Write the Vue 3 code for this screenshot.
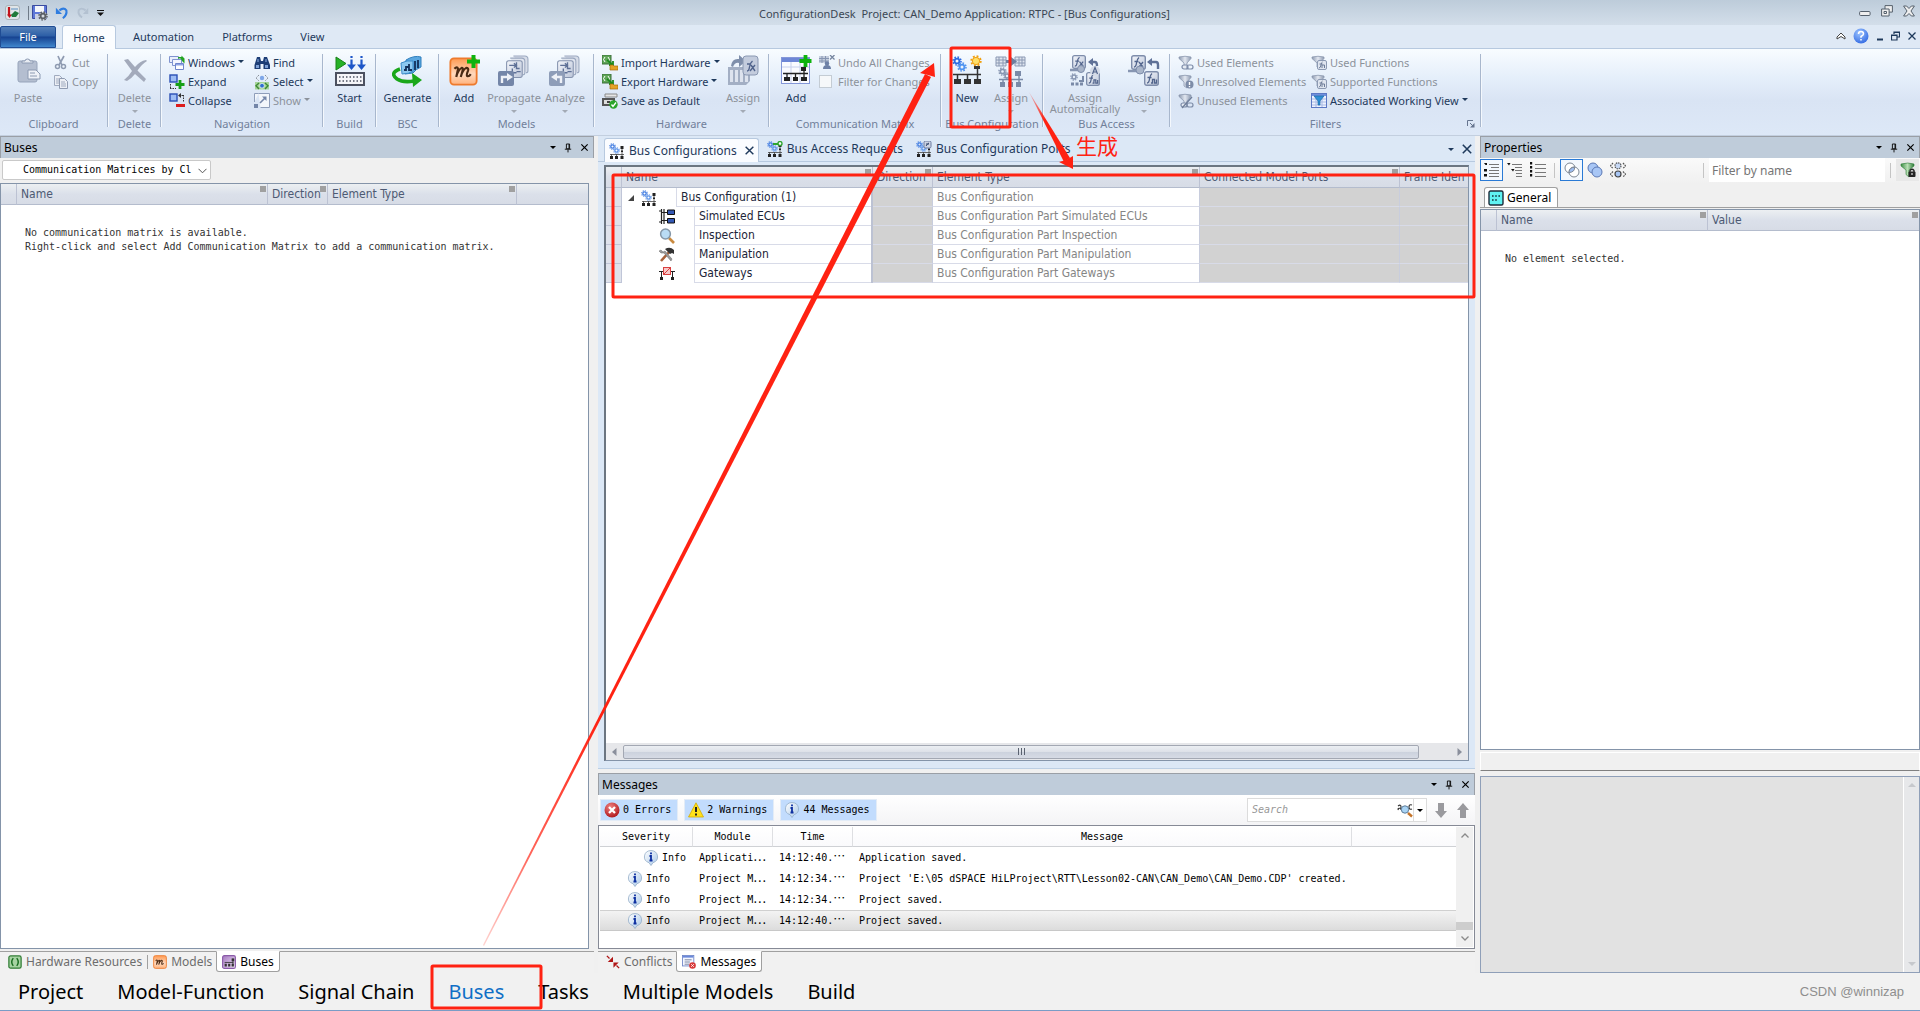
<script setup>
import { ref } from 'vue'

const filterText = ref('')
const searchText = ref('')

const ribbon = [
  { id: 'clipboard', label: 'Clipboard', parts: [
    { kind: 'big', w: 'w50', icon: 'paste', text: 'Paste', off: true },
    { kind: 'list', rows: [{ icon: 'cut', text: 'Cut', off: true }, { icon: 'copy', text: 'Copy', off: true }] }
  ] },
  { id: 'delete', label: 'Delete', parts: [{ kind: 'big', w: 'w46', icon: 'delete', text: 'Delete', off: true, menu: true }] },
  { id: 'navigation', label: 'Navigation', parts: [
    { kind: 'list', w: 'w85', rows: [{ icon: 'windows', text: 'Windows', menu: true }, { icon: 'expand', text: 'Expand' }, { icon: 'collapse', text: 'Collapse' }] },
    { kind: 'list', rows: [{ icon: 'find', text: 'Find' }, { icon: 'select', text: 'Select', menu: true }, { icon: 'show', text: 'Show', menu: true, off: true }] }
  ] },
  { id: 'build', label: 'Build', parts: [{ kind: 'big', w: 'w46', icon: 'start', text: 'Start' }] },
  { id: 'bsc', label: 'BSC', parts: [{ kind: 'big', w: 'w56', icon: 'generate', text: 'Generate' }] },
  { id: 'models', label: 'Models', parts: [
    { kind: 'big', w: 'w44', icon: 'addmodel', text: 'Add' },
    { kind: 'big', w: 'w56', icon: 'propagate', text: 'Propagate', off: true, menu: true },
    { kind: 'big', w: 'w46', icon: 'analyze', text: 'Analyze', off: true, menu: true }
  ] },
  { id: 'hardware', label: 'Hardware', parts: [
    { kind: 'list', w: 'w118', rows: [{ icon: 'import', text: 'Import Hardware', menu: true }, { icon: 'export', text: 'Export Hardware', menu: true }, { icon: 'savedef', text: 'Save as Default' }] },
    { kind: 'big', w: 'w46', icon: 'assignhw', text: 'Assign', off: true, menu: true }
  ] },
  { id: 'matrix', label: 'Communication Matrix', parts: [
    { kind: 'big', w: 'w46', icon: 'addmatrix', text: 'Add' },
    { kind: 'list', rows: [{ icon: 'undoall', text: 'Undo All Changes', off: true }, { check: true, text: 'Filter for Changes', off: true }] }
  ] },
  { id: 'busconf', label: 'Bus Configuration', parts: [
    { kind: 'big', w: 'w44', icon: 'newbus', text: 'New' },
    { kind: 'big', w: 'w44', icon: 'assignbus', text: 'Assign', off: true, menu: true }
  ] },
  { id: 'busaccess', label: 'Bus Access', parts: [
    { kind: 'big', w: 'w74', icon: 'assignauto', text: 'Assign Automatically', off: true },
    { kind: 'big', w: 'w44', icon: 'assignaccess', text: 'Assign', off: true, menu: true }
  ] },
  { id: 'filters', label: 'Filters', launcher: true, parts: [
    { kind: 'list', w: 'w133', rows: [{ icon: 'fused', text: 'Used Elements', off: true }, { icon: 'funres', text: 'Unresolved Elements', off: true }, { icon: 'funused', text: 'Unused Elements', off: true }] },
    { kind: 'list', rows: [{ icon: 'ffn', text: 'Used Functions', off: true }, { icon: 'ffn', text: 'Supported Functions', off: true }, { icon: 'wview', text: 'Associated Working View', menu: true }] }
  ] }
]

const docTabs = [
  { icon: 'busconf', text: 'Bus Configurations', active: true },
  { icon: 'busreq', text: 'Bus Access Requests' },
  { icon: 'busports', text: 'Bus Configuration Ports' }
]

const configRows = [
  { icon: 'busconf', name: 'Bus Configuration (1)', type: 'Bus Configuration', root: true },
  { icon: 'ecu', name: 'Simulated ECUs', type: 'Bus Configuration Part Simulated ECUs' },
  { icon: 'inspect', name: 'Inspection', type: 'Bus Configuration Part Inspection' },
  { icon: 'hammer', name: 'Manipulation', type: 'Bus Configuration Part Manipulation' },
  { icon: 'gateway', name: 'Gateways', type: 'Bus Configuration Part Gateways' }
]

const messages = [
  { module: 'Applicati', time: '14:12:40.', text: 'Application saved.', deep: true },
  { module: 'Project M', time: '14:12:34.', text: "Project 'E:\\05 dSPACE HiLProject\\RTT\\Lesson02-CAN\\CAN_Demo\\CAN_Demo.CDP' created." },
  { module: 'Project M', time: '14:12:34.', text: 'Project saved.' },
  { module: 'Project M', time: '14:12:40.', text: 'Project saved.', selected: true }
]

const counters = [
  { icon: 'error', text: '0 Errors' },
  { icon: 'warning', text: '2 Warnings' },
  { icon: 'info', text: '44 Messages' }
]

const workspaces = ['Project', 'Model-Function', 'Signal Chain', 'Buses', 'Tasks', 'Multiple Models', 'Build']
</script>

<template>
  <div class="desk">
    <svg class="sprites" width="0" height="0" aria-hidden="true">
      <defs>
        <linearGradient id="gOrange" x1="0" y1="0" x2="0" y2="1"><stop offset="0" stop-color="#ff9a52" /><stop offset=".6" stop-color="#ffd9bd" /><stop offset="1" stop-color="#ffb27c" /></linearGradient>
        <linearGradient id="gCard" x1="0" y1="0" x2="1" y2="1"><stop offset="0" stop-color="#f3f5fa" /><stop offset="1" stop-color="#bcc6d9" /></linearGradient>
        <linearGradient id="gFunnel" x1="0" y1="0" x2="1" y2="0"><stop offset="0" stop-color="#8d9ab0" /><stop offset=".5" stop-color="#e2e7f0" /><stop offset="1" stop-color="#8d9ab0" /></linearGradient>
        <linearGradient id="gGreenFunnel" x1="0" y1="0" x2="1" y2="0"><stop offset="0" stop-color="#3f9048" /><stop offset=".5" stop-color="#b9e0b5" /><stop offset="1" stop-color="#2f7d39" /></linearGradient>
        <linearGradient id="gPurple" x1="0" y1="0" x2="1" y2="1"><stop offset="0" stop-color="#a477c0" /><stop offset="1" stop-color="#f0e4f6" /></linearGradient>
        <radialGradient id="gHelp" cx=".4" cy=".3" r=".8"><stop offset="0" stop-color="#9cc4ff" /><stop offset="1" stop-color="#2a63e0" /></radialGradient>
        <radialGradient id="gErr" cx=".4" cy=".3" r=".8"><stop offset="0" stop-color="#f08080" /><stop offset="1" stop-color="#a80d12" /></radialGradient>
        <linearGradient id="gInfo" x1="0" y1="0" x2="1" y2="1"><stop offset="0" stop-color="#ffffff" /><stop offset="1" stop-color="#a9c8e8" /></linearGradient>
        <linearGradient id="gArrow" gradientUnits="userSpaceOnUse" x1="484" y1="945" x2="600" y2="720"><stop offset="0" stop-color="#ff2212" stop-opacity=".2" /><stop offset=".4" stop-color="#ff2212" stop-opacity=".7" /><stop offset="1" stop-color="#ff2212" /></linearGradient>
        <linearGradient id="gArrow2" gradientUnits="userSpaceOnUse" x1="1029" y1="92" x2="1045" y2="120"><stop offset="0" stop-color="#ff2212" stop-opacity=".2" /><stop offset="1" stop-color="#ff2212" /></linearGradient>
      </defs>

      <symbol id="gear" viewBox="0 0 12 12">
        <circle cx="6" cy="6" r="4.8" fill="none" stroke="currentColor" stroke-width="1.8" stroke-dasharray="1.9 1.87" />
        <circle cx="6" cy="6" r="2.9" fill="none" stroke="currentColor" stroke-width="2.2" />
      </symbol>
      <symbol id="card" viewBox="0 0 24 24">
        <path d="M9 1h11q3 0 3 3v11q0 2-2 2" fill="#d6dce8" stroke="#9ba8bf" />
        <path d="M6 3h11q3 0 3 3v11q0 2-2 2" fill="#dfe4ee" stroke="#9ba8bf" />
        <rect x="2.500" y="5.500" width="15" height="16" rx="2" fill="url(#gCard)" stroke="#8593ae" />
        <path d="M5 10h7M9.500 8l2.500 2-2.500 2M12 7v6h3M12 16h4M8 13v4h4" fill="none" stroke="#5f7197" stroke-width="1.3" />
      </symbol>
      <symbol id="funnel" viewBox="0 0 16 16"><path d="M1 2q6-1.500 12 0v1.500L9 8v6l-3-2V8L1 3.500Z" fill="url(#gFunnel)" stroke="#8b98ae" stroke-width=".8" /></symbol>

      <symbol id="i-app" viewBox="0 0 16 16"><rect x=".5" y=".5" width="14" height="14" rx="2.500" fill="#dfe5e8" stroke="#a9b3b9" /><path d="M4 2v9" stroke="#c3141c" stroke-width="2.200" /><path d="M2 9.500h5L4.500 13Z" fill="#c3141c" /><path d="M6 10l4-4 4 2-3 4H7Z" fill="#1f7a3a" /><path d="M6 4h7" stroke="#5b8fc2" /></symbol>
      <symbol id="i-save" viewBox="0 0 16 16"><path d="M.5.5h14v13H.5Z" fill="#5e78d8" stroke="#3a4ba0" /><path d="M3 1h9v6H3Z" fill="#f4f6fb" /><path d="M3 9h6v5H3Z" fill="#c9d0e4" /><circle cx="11" cy="11" r="4" fill="#d5dae0" /><g color="#5a5f66"><use href="#gear" x="6" y="6" width="10" height="10" /></g></symbol>
      <symbol id="i-undo" viewBox="0 0 16 16"><path d="M5 5q5-4 8 0 1 5-4 9" fill="none" stroke="#2f7de0" stroke-width="2.400" /><path d="M1 2v7h7Z" fill="#2f7de0" /></symbol>
      <symbol id="i-redo" viewBox="0 0 16 16"><path d="M11 5q-5-4-8 0-1 5 4 8" fill="none" stroke="#b3c1d1" stroke-width="2.200" /><path d="M14 2v7H8Z" fill="#b3c1d1" /></symbol>

      <symbol id="i-paste" viewBox="0 0 32 32"><rect x="6" y="6" width="19" height="21" rx="2" fill="#b4bed0" stroke="#97a4bb" /><path d="M10 8h11V6h-3q0-2-2.500-2T13 6h-3Z" fill="#e8ecf3" stroke="#8c9ab2" /><path d="M16 15h8l4 4v5H16Z" fill="#eef1f7" stroke="#8c9ab2" /><path d="M18 18h5M18 21h7" stroke="#8c9ab2" /></symbol>
      <symbol id="i-delete" viewBox="0 0 32 32"><path d="M5 5 9 4l7 8q5-6 11-7l1 1q-5 3-9.500 9.500L27 24l-2 3-9-8q-4 5-8 7l-3-1q5-4 8-9Z" fill="#a3aabb" /></symbol>
      <symbol id="i-cut" viewBox="0 0 16 16"><path d="M5 1l4 9M11 1 6 10" stroke="#8f9bb1" stroke-width="1.700" fill="none" /><circle cx="4.500" cy="11.500" r="2" fill="none" stroke="#8f9bb1" stroke-width="1.500" /><circle cx="10.500" cy="11.500" r="2" fill="none" stroke="#8f9bb1" stroke-width="1.500" /></symbol>
      <symbol id="i-copy" viewBox="0 0 16 16"><path d="M1.500 1.500h5l3 3v7h-8Z" fill="#eceff5" stroke="#a0abbf" /><path d="M3 5h4M3 7h4M3 9h4" stroke="#a0abbf" /><path d="M6.500 4.500h5l3 3v7h-8Z" fill="#eceff5" stroke="#8f9bb1" /><path d="M8 8h4M8 10h5M8 12h5" stroke="#a0abbf" /></symbol>
      <symbol id="i-windows" viewBox="0 0 16 16"><path d="M.5 1.500h9v6h-9Z" fill="#e9eefc" stroke="#7f93cf" /><path d="M3.500 4.500h9v6h-9Z" fill="#f3f6ff" stroke="#7f93cf" /><path d="M6.500 8.500h8v6h-8Z" fill="#fff" stroke="#6e85cc" /><path d="M7 9h7v1.500H7Z" fill="#8ea4e4" /><path d="M9 2h3.500v-1.500l3 3v5l-2-2-2-3H9Z" fill="#22a322" /></symbol>
      <symbol id="i-expand" viewBox="0 0 16 16"><rect x="1" y="1" width="7" height="7" fill="#9dbcf4" stroke="#2a4fb5" stroke-width="1.400" /><path d="M1.500 10v5M1 14.500h6" stroke="#333" stroke-dasharray="1.500 1" /><path d="M11 6v9M6.500 10.500h9" stroke="#16a016" stroke-width="2.800" /></symbol>
      <symbol id="i-collapse" viewBox="0 0 16 16"><rect x="1" y="1" width="7" height="7" fill="#9dbcf4" stroke="#2a4fb5" stroke-width="1.400" /><path d="M10 2.500h5M14.500 2v7" stroke="#333" stroke-dasharray="1.500 1" /><path d="M12 0l-3 2.500L12 5Z" fill="#333" /><path d="M7 12.500h9" stroke="#dd1c1c" stroke-width="3" /></symbol>
      <symbol id="i-find" viewBox="0 0 16 16"><path d="M3 2h3l1 4h2l1-4h3l3 8v4H9.500V9h-3v5H.5v-4Z" fill="#1d3d75" /><path d="M2 10h3v3H2ZM11 10h3v3h-3Z" fill="#7ea0d6" /><path d="M4 4v3M12 4v3" stroke="#8fb0e4" /></symbol>
      <symbol id="i-select" viewBox="0 0 16 16"><path d="M1 8h14v7.500H1Z" fill="#a6d49b" /><path d="M5 1 2 4l3 3M11 1l3 3-3 3" fill="none" stroke="#8a9098" stroke-dasharray="1.500 .7" /><circle cx="8" cy="4" r="2.200" fill="#7ea7e8" /><path d="M5 9l-3 2.700L5 15M11 9l3 2.700L11 15" fill="none" stroke="#3f8a35" stroke-width="1.400" /><circle cx="8" cy="11.700" r="2.300" fill="#2f6fd0" stroke="#fff" stroke-width=".6" /></symbol>
      <symbol id="i-show" viewBox="0 0 16 16"><path d="M4.500.5h11v14h-9M.5 9V.5h4" fill="#f3f6fb" stroke="#8e9db9" /><path d="M6 10l5-5" stroke="#7385a8" stroke-width="1.600" /><path d="M8 3.500h4.500V8Z" fill="#7385a8" /><rect x="0" y="11" width="4" height="4" fill="#7385a8" /></symbol>

      <symbol id="i-start" viewBox="0 0 32 32"><path d="M2 2v13l10-6.500Z" fill="#26b226" stroke="#188218" /><path d="M17.500 1v11M27.500 1v11" stroke="#1d56c8" stroke-width="2.200" stroke-dasharray="2 1.500 9" /><path d="M13 9.500h9L17.500 15ZM23 9.500h9L27.500 15Z" fill="#1d56c8" /><rect x="2" y="18" width="28" height="12" fill="#f5f5f8" stroke="#4c5160" stroke-width="2" /><path d="M5 22h23M5 26h23" stroke="#4c5160" stroke-width="1.600" stroke-dasharray="1.500 2" /></symbol>
      <symbol id="i-generate" viewBox="0 0 32 32"><path d="M14 5q8-5 15-3v10q-5 2-8 6l-8 1Z" fill="#5aa7e0" stroke="#2f7fbd" /><path d="M9 8q6-3 12-2v10q-4 3-11 3Z" fill="#8cc8f0" stroke="#3c8bc8" /><path d="M12 15h2v-3h3v3h3M17 9v3M23 6v9M26 5v8" stroke="#13305a" stroke-width="1.800" fill="none" /><path d="M8 14Q-3 18 5 24q6 4 17 2" fill="none" stroke="#1aa71a" stroke-width="3.600" /><path d="M20 18l10 7-9 7Z" fill="#1aa71a" /></symbol>
      <symbol id="i-m" viewBox="0 0 32 32"><rect x="1.500" y="1.500" width="29" height="29" rx="4" fill="url(#gOrange)" stroke="#ee7a2c" stroke-width="2" /><path d="M6 13q3-3 4 0-1 5-2 9 2-8 6-10 2 0 1 3l-2 7q2-8 6-10 3 0 2 3-2 5-1 6 2 1 4-2" fill="none" stroke="#4a2a14" stroke-width="2.400" /></symbol>
      <symbol id="i-addmodel" viewBox="0 0 32 32"><use href="#i-m" x="1" y="2" width="29" height="29" /><path d="M25.500 0v13M19 6.500h13" stroke="#0db30d" stroke-width="4" /></symbol>
      <symbol id="i-propagate" viewBox="0 0 32 32"><use href="#card" x="6" y="0" width="25" height="25" /><rect x="0" y="16" width="16" height="15" rx="2" fill="#7486a8" /><path d="M4 28v-6h6" fill="none" stroke="#eef1f7" stroke-width="2.400" /><path d="M9 18l6 4-6 4Z" fill="#eef1f7" /></symbol>
      <symbol id="i-analyze" viewBox="0 0 32 32"><use href="#card" x="6" y="0" width="25" height="25" /><rect x="0" y="16" width="16" height="15" rx="2" fill="#8e9db8" /><path d="M12 28v-6H7" fill="none" stroke="#eef1f7" stroke-width="2.400" /><path d="M8 18l-6 4 6 4Z" fill="#eef1f7" /></symbol>
      <symbol id="i-import" viewBox="0 0 16 16"><path d="M0 0h9v9H0Z" fill="#5fa657" stroke="#3d6e3a" /><path d="M3 2 1.500 4.500 3 7M6 2l1.500 2.500L6 7" fill="none" stroke="#fff" /><path d="M5 5l6 5M11 6v4H7" fill="none" stroke="#1c8a1c" stroke-width="1.800" /><path d="M8 10h3l1 1h4v4H8Z" fill="#e6a328" stroke="#a66c0b" stroke-width=".7" /></symbol>
      <symbol id="i-savedef" viewBox="0 0 16 16"><path d="M3 1h12v3H3Z" fill="#e6e6e6" stroke="#8a8a8a" /><path d="M0 5h13v8H0Z" fill="#555" /><path d="M2 7h9v4H2Z" fill="#ddd" /><path d="M5 8h3v2H5Z" fill="#444" /><circle cx="11.500" cy="11.500" r="4.200" fill="#2aa52a" /><path d="M9.500 11.500l1.500 2 3-4" fill="none" stroke="#fff" stroke-width="1.300" /></symbol>
      <symbol id="i-assignhw" viewBox="0 0 32 32"><path d="M1 12h22v14l-4 4H1Z" fill="#a3afc4" /><path d="M3 15h3v12H3ZM8 15h3v12H8ZM13 15h3v12h-3ZM18 15h3v12h-3Z" fill="#dde3ee" /><path d="M4 11q1-8 8-7V0l7 6-7 6V8Q8 7 6 12Z" fill="#7f8fab" /><rect x="16" y="1" width="15" height="19" rx="3" fill="#c3ccdd" stroke="#8a98b2" /><path d="M20 16q2 0 2.500-4t3-6M20 9h4M24 10l4 6M28 10l-5 6" fill="none" stroke="#51648c" stroke-width="1.400" /></symbol>
      <symbol id="i-addmatrix" viewBox="0 0 32 32"><rect x="1.500" y="2.500" width="28" height="26" fill="#fafbff" stroke="#8497d8" /><path d="M2 3h27v4H2Z" fill="#6d86d6" /><path d="M2 12h27M11 7v21M20 7v21" stroke="#c7d0ec" /><path d="M3 18.500h25M7 18v4M15.500 18v4M24 14v8" stroke="#222" stroke-width="1.300" /><path d="M4 22h6v4H4ZM13 22h5v4h-5ZM21 22h6v4h-6ZM21 12h5v4h-5Z" fill="#222" /><path d="M25.500 0v12M19.500 6h12" stroke="#0db30d" stroke-width="3.800" /></symbol>
      <symbol id="i-undoall" viewBox="0 0 16 16"><path d="M0 1h10v7H0Z" fill="#c4cddd" /><path d="M0 3.500h10M0 6h10M3 1v7M6.500 1v7" stroke="#8796b2" /><circle cx="8" cy="8.500" r="2.200" fill="#6d80a6" /><path d="M4 14q0-4 4-4t4 4Z" fill="#6d80a6" /><path d="M11 0l4.500 4.500M15.500 0 11 4.500" stroke="#75859f" stroke-width="1.300" /></symbol>
      <symbol id="i-newbus" viewBox="0 0 32 32"><g color="#2b6ae0"><use href="#gear" x="1" y="1" width="10" height="10" /></g><g color="#4f93f0"><use href="#gear" x="6" y="7" width="10" height="10" /></g><g color="#f0a010"><use href="#gear" x="19" y="0" width="12" height="12" /></g><circle cx="25" cy="6" r="3" fill="#ffe06a" /><path d="M2 19.500h28M6.500 19v5M16.500 19v5M26.500 12v12" stroke="#333" stroke-width="1.500" /><path d="M3 24h7v5H3ZM13 24h7v5h-7ZM23 24h7v5h-7ZM23 11h6v3h-6Z" fill="#333" /></symbol>
      <symbol id="i-assignbus" viewBox="0 0 32 32"><path d="M1 2h10v9H1ZM20 2h10v9H20Z" fill="#dfe5ef" stroke="#8b99b3" /><path d="M1 5h10M1 8h10M4 2v9M8 2v9M24 2v9M27 2v9M20 5h10M20 8h10" stroke="#8b99b3" /><path d="M11 6.500h6" stroke="#6d7f9f" stroke-width="3" /><path d="M16 2l6 4.500-6 4.500Z" fill="#6d7f9f" /><g color="#8796b2"><use href="#gear" x="3" y="12" width="9" height="9" /><use href="#gear" x="8" y="17" width="8" height="8" /></g><path d="M4 24.500h24M8 24v4M16 24v4M24 18v9" stroke="#7a8aa8" stroke-width="1.400" /><path d="M5 27h5v5H5ZM13 27h5v5h-5ZM21 27h5v5h-5ZM20 16h6v5h-6Z" fill="#7a8aa8" /></symbol>
      <symbol id="fx" viewBox="0 0 15 15"><rect x=".7" y=".7" width="13.600" height="13.600" rx="2" fill="url(#gCard)" stroke="#7e8dab" stroke-width="1.400" /><path d="M3 12q2 0 2.500-4t2.500-5.500M3.500 6.500h4M8 7l4 5M12 7l-4 5" fill="none" stroke="#51648c" stroke-width="1.300" /></symbol>
      <symbol id="fn" viewBox="0 0 15 15"><rect x=".7" y=".7" width="13.600" height="13.600" rx="2" fill="url(#gCard)" stroke="#7e8dab" stroke-width="1.400" /><path d="M3 12q2 0 2.500-4t2.500-5.500M3.500 6.500h4M7 12h1.500V8.500h2V12h2V8.500" fill="none" stroke="#51648c" stroke-width="1.300" /></symbol>
      <symbol id="i-assignaccess" viewBox="0 0 32 32"><use href="#fx" x="3" y="0" width="15" height="15" /><path d="M0 16h8" stroke="#8796b2" stroke-width="2.500" /><circle cx="12" cy="15" r="4" fill="#a9b5c9" stroke="#7e8dab" /><path d="M22 7h6q2 0 2 3v4" fill="none" stroke="#5f7197" stroke-width="2.400" /><path d="M24 3l-5 4 5 4Z" fill="#5f7197" /><use href="#fn" x="16" y="16" width="15" height="15" /></symbol>
      <symbol id="i-assignauto" viewBox="0 0 32 32"><use href="#fx" x="3" y="0" width="14" height="14" /><path d="M1 15h8" stroke="#8796b2" stroke-width="2.500" /><circle cx="12" cy="14" r="3.500" fill="#a9b5c9" stroke="#7e8dab" /><path d="M22 7h4q2 0 2 4" fill="none" stroke="#5f7197" stroke-width="2.400" /><path d="M24 3l-5 4 5 4Z" fill="#5f7197" /><use href="#fn" x="17" y="17" width="14" height="14" /><circle cx="26" cy="16" r="5" fill="#d5dbe7" /><path d="M23.500 19l2.500-6.500 2.500 6.500M24.500 17h3" fill="none" stroke="#51648c" stroke-width="1.200" /><g color="#8796b2"><use href="#gear" x="1" y="18" width="8" height="8" /></g><path d="M2 29h12" stroke="#7a8aa8" stroke-width="3" stroke-dasharray="3 1.500" /><path d="M10 26h4v-5" stroke="#7a8aa8" stroke-width="2" fill="none" /></symbol>

      <symbol id="i-fused" viewBox="0 0 16 16"><use href="#funnel" width="16" height="16" /><rect x="4" y="10" width="6" height="4" rx="2" fill="#e5eaf2" stroke="#7d8ca8" stroke-width="1.200" /><rect x="9" y="10" width="6" height="4" rx="2" fill="none" stroke="#7d8ca8" stroke-width="1.200" /></symbol>
      <symbol id="i-funres" viewBox="0 0 16 16"><use href="#funnel" width="16" height="16" /><circle cx="11.500" cy="10.500" r="4" fill="#7d8ca8" /><path d="M11.500 8v3M11.500 12v1.200" stroke="#fff" stroke-width="1.400" /></symbol>
      <symbol id="i-funused" viewBox="0 0 16 16"><use href="#funnel" width="16" height="16" /><rect x="3" y="10" width="6" height="4" rx="2" fill="#e5eaf2" stroke="#7d8ca8" stroke-width="1.200" /><rect x="9" y="10" width="6" height="4" rx="2" fill="none" stroke="#7d8ca8" stroke-width="1.200" /><path d="M14 4 4 15" stroke="#6d7c98" stroke-width="1.300" /></symbol>
      <symbol id="i-ffn" viewBox="0 0 16 16"><use href="#funnel" width="16" height="16" /><rect x="6.500" y="5.500" width="9" height="9" rx="1.500" fill="#dfe5ef" stroke="#8c9ab3" /><path d="M8 13q1.500 0 2-3t1.500-3M8.500 9h3M11 13v-3h2.500v3" fill="none" stroke="#6d7c98" /></symbol>
      <symbol id="i-wview" viewBox="0 0 16 16"><rect x=".5" y=".5" width="15" height="14" fill="#eef3ff" stroke="#5c78c4" /><path d="M1 1h14v2H1Z" fill="#6f8fdc" /><path d="M1 6h14M1 9h14M1 12h14M5 3v11M11 3v11" stroke="#a8b9e4" /><path d="M3 3h10l-4 5v4H7V8Z" fill="#2f8fd6" stroke="#1b6aa8" stroke-width=".7" /></symbol>

      <symbol id="i-busconf" viewBox="0 0 16 16"><g color="#3f7be0"><use href="#gear" x="0" y="0" width="7" height="7" /></g><g color="#5b93e8"><use href="#gear" x="4" y="4" width="7" height="7" /></g><path d="M1 11.500h14M2.500 11v2M7.500 11v2M13 5v8" stroke="#444" stroke-width=".8" /><path d="M1 13h3v3H1ZM6 13h3v3H6ZM11.500 13h3v3h-3ZM11.500 3h3v3h-3ZM12 7.500h2V9h-2Z" fill="#222" /></symbol>
      <symbol id="i-busreq" viewBox="0 0 16 16"><use href="#i-busconf" width="16" height="16" /><path d="M6 3h6" stroke="#2fa52f" stroke-width="2" /><circle cx="13" cy="2.500" r="2" fill="#fff" stroke="#2fa52f" stroke-width="1.400" /></symbol>
      <symbol id="i-busports" viewBox="0 0 16 16"><use href="#i-busconf" width="16" height="16" /><rect x="8" y="0" width="7" height="7" rx="1.500" fill="#cdd3e2" stroke="#6a7aa0" /><path d="M10 5q2-3 3-3M10 3h3" stroke="#33466f" fill="none" /></symbol>
      <symbol id="i-ecu" viewBox="0 0 16 16"><path d="M2.500 0v15M5 0v15M2 3.500h6M2 11.500h6M0 2h3M0 13h3" stroke="#222" stroke-width="1.200" /><path d="M8.500 1h7v4.500h-7ZM8.500 9.500h7V14h-7Z" fill="#3459b5" stroke="#111" /></symbol>
      <symbol id="i-inspect" viewBox="0 0 16 16"><path d="M10 10l5 5" stroke="#c98a3f" stroke-width="2.600" /><circle cx="6.500" cy="6" r="4.900" fill="#b9dcf5" stroke="#8497a8" stroke-width="1.500" /></symbol>
      <symbol id="i-hammer" viewBox="0 0 16 16"><path d="M2 14 11 4" stroke="#a8613a" stroke-width="2.600" /><path d="M6 2q5-3 9 1v4l-2-1-2 1Z" fill="#333" /><path d="M2 3l2 2 2-1 7 8-1 2-7-8-3 0-2-2Z" fill="#9a9a9a" stroke="#6b6b6b" stroke-width=".5" /></symbol>
      <symbol id="i-gateway" viewBox="0 0 16 16"><path d="M0 5.500h4M2.500 5v8M12 5.500h4M13.500 5v8" stroke="#222" /><path d="M1 11h3v3H1ZM12 11h3v3h-3Z" fill="#222" /><rect x="4.500" y="1.500" width="7" height="7" fill="#f8c9c9" stroke="#d94040" /><path d="M5 8l6-6" stroke="#d94040" /></symbol>

      <symbol id="i-error" viewBox="0 0 16 16"><circle cx="8" cy="8" r="7.500" fill="url(#gErr)" /><path d="M5 5l6 6M11 5l-6 6" stroke="#fff" stroke-width="2.300" /></symbol>
      <symbol id="i-warning" viewBox="0 0 16 16"><path d="M8 .8 15.500 15H.5Z" fill="#ffe11a" stroke="#d3a900" stroke-width=".8" /><path d="M8 5v5M8 11.500v2" stroke="#222" stroke-width="2" /></symbol>
      <symbol id="i-info" viewBox="0 0 16 16"><path d="M8 .5a7 6.300 0 0 1 2 12.200L8 15.500l-2-2.800A7 6.300 0 0 1 8 .5Z" fill="url(#gInfo)" stroke="#93adc8" stroke-width=".8" /><path d="M8 2.500v1.800M6.500 6H8v4.500M6.500 10.500h3" stroke="#0d2fa0" stroke-width="1.800" fill="none" /></symbol>
      <symbol id="i-conflict" viewBox="0 0 16 16"><path d="M1 1l3 3M15 15l-3-3" stroke="#b01515" stroke-width="1.500" /><path d="M8 2v6H2ZM8.500 8.500h6l-6 6Z" fill="#b01515" /></symbol>
      <symbol id="i-messages" viewBox="0 0 16 16"><rect x=".5" y=".5" width="13" height="12" fill="#f3f6ff" stroke="#6f86c8" /><path d="M1 1h12v2H1Z" fill="#6a88da" /><path d="M3 5.500h8M3 8h6M3 10.500h5" stroke="#6d7896" /><circle cx="12" cy="12" r="3.800" fill="#d83a3a" /><path d="M10.500 10.500l3 3M13.500 10.500l-3 3" stroke="#fff" /></symbol>
      <symbol id="i-hwres" viewBox="0 0 16 16"><rect x="1" y="1" width="14" height="14" rx="2" fill="#a6d3a2" stroke="#2f7c33" stroke-width="1.400" /><path d="M6 3.500Q2.500 8 6 12.500M10 3.500Q13.500 8 10 12.500" fill="none" stroke="#146a1c" stroke-width="1.600" /></symbol>
      <symbol id="i-buses" viewBox="0 0 16 16"><rect x=".7" y=".7" width="14.600" height="14.600" rx="2" fill="url(#gPurple)" stroke="#8a5aa8" stroke-width="1.300" /><path d="M3 8.500h10M12.500 4v8" stroke="#333" /><path d="M3 10h2.500v3H3ZM7 10h2.500v3H7ZM11 10h2.500v3H11ZM11 4h3v3h-3Z" fill="#333" /></symbol>
      <symbol id="i-general" viewBox="0 0 16 16"><rect x="1" y="1" width="14" height="14" rx="1.500" fill="#5ff2f2" stroke="#1d2b3a" stroke-width="1.400" /><path d="M4 6h9M4 10h6" stroke="#14303c" stroke-width="1.600" stroke-dasharray="1.600 1.600" /></symbol>
      <symbol id="i-lockfilter" viewBox="0 0 16 16"><path d="M1 2q7-2 13 0v2L9 8v7l-3-2.500V8L1 4Z" fill="url(#gGreenFunnel)" stroke="#2f7d39" stroke-width=".6" /><path d="M10 10V8.500q2-2.500 4 0V10" fill="none" stroke="#222" stroke-width="1.300" /><rect x="8.500" y="9.500" width="7" height="5.500" rx="1" fill="#222" /><path d="M12 11v2" stroke="#fff" /></symbol>
      <symbol id="i-list1" viewBox="0 0 16 16"><path d="M5 2.500h10M7 5.500h8M5 8.500h10M5 11.500h10M5 14.500h10" stroke="#777" /><path d="M0 1h3v2H1.500ZM0 7h3v2.500H0ZM0 12h3v2.500H0Z" fill="#111" /></symbol>
      <symbol id="i-list2" viewBox="0 0 16 16"><path d="M5 2.500h10M8 5.500h7M8 8.500h7M9 11.500h6M9 14.500h6" stroke="#777" /><path d="M0 1h3.500L2 3.500ZM4 7h3.500L6 9.500Z" fill="#111" /></symbol>
      <symbol id="i-list3" viewBox="0 0 16 16"><path d="M5 2.500h11M5 6.500h11M5 10.500h11M5 14.500h11" stroke="#777" stroke-width="1.200" /><path d="M1 0v16" stroke="#111" stroke-width="2.400" stroke-dasharray="2.500 1.500" /></symbol>
      <symbol id="i-venn1" viewBox="0 0 16 16"><circle cx="6" cy="6" r="5" fill="#fff" stroke="#7d8794" /><circle cx="10" cy="10" r="5" fill="#fff" stroke="#7d8794" /><path d="M5.200 9.600Q5.500 5.500 10.600 5.200 11 10 5.200 10.600Z" fill="#9dbdf0" stroke="#7d8794" /></symbol>
      <symbol id="i-venn2" viewBox="0 0 16 16"><circle cx="6" cy="6" r="5" fill="#a8c6f5" stroke="#5b78b4" /><circle cx="10" cy="10" r="5" fill="#a8c6f5" stroke="#5b78b4" /></symbol>
      <symbol id="i-venn3" viewBox="0 0 16 16"><path d="M3 1 .5 3.800 3 6.500M13 1l2.500 2.800L13 6.500M3 9.500.5 12.200 3 15M13 9.500l2.500 2.700L13 15" fill="none" stroke="#555" stroke-width="1.200" stroke-dasharray="1.800 .8" /><circle cx="8" cy="3.800" r="3" fill="#c6d8f5" stroke="#555" stroke-width="1.200" stroke-dasharray="1.500 .8" /><circle cx="8" cy="12" r="3" fill="#a8c6f5" stroke="#444" stroke-width="1.200" /></symbol>
      <symbol id="i-lookup" viewBox="0 0 16 16"><path d="M1 4q3-2 3 1v3M4 6Q0 6 1.500 8M15 3q-3-1-3 2t3 2" fill="none" stroke="#333" stroke-width="1.200" /><path d="M11 11l4 3.500" stroke="#c4742a" stroke-width="2.400" /><circle cx="8" cy="7.500" r="3.700" fill="#a9d4f5" stroke="#5d7c99" /></symbol>
      <symbol id="i-pin" viewBox="0 0 10 12"><path d="M3 1h4v6H3ZM1 7.500h8M5 8v3.500M6.300 1v6" fill="none" stroke="#111" stroke-width="1.200" /></symbol>
      <symbol id="i-x" viewBox="0 0 10 10"><path d="M1.500 1.500l7 7M8.500 1.500l-7 7" stroke="currentColor" stroke-width="1.300" /></symbol>
      <symbol id="i-down" viewBox="0 0 8 4"><path d="M0 0h8L4 4Z" fill="currentColor" /></symbol>
    </svg>

    <header class="titlebar">
      <div class="quick">
        <svg class="i16"><use href="#i-app" /></svg>
        <span class="quick-sep"></span>
        <button class="bare" aria-label="Save"><svg class="i16"><use href="#i-save" /></svg></button>
        <button class="bare" aria-label="Undo"><svg class="i14"><use href="#i-undo" /></svg></button>
        <button class="bare" aria-label="Redo"><svg class="i14"><use href="#i-redo" /></svg></button>
        <button class="bare" aria-label="Customize"><svg width="7" height="7" viewBox="0 0 7 7"><path d="M0 1.500h7" stroke="#111" /><path d="M0 3.500h7L3.500 7Z" fill="#111" /></svg></button>
      </div>
      <h1>ConfigurationDesk&nbsp; Project: CAN_Demo Application: RTPC - [Bus Configurations]</h1>
      <div class="winctl">
        <button class="bare" aria-label="Minimize"><svg width="12" height="12" viewBox="0 0 12 12"><rect x=".6" y="6.500" width="10.500" height="4" rx="1" fill="#eee" stroke="#55606c" /></svg></button>
        <button class="bare" aria-label="Restore"><svg width="12" height="12" viewBox="0 0 12 12"><path d="M4 .6h7.400v6.500H4Z" fill="#eee" stroke="#55606c" /><path d="M.6 4h7.500v7H.6ZM3 6.500h2.500v2H3Z" fill="#eee" stroke="#55606c" /></svg></button>
        <button class="bare" aria-label="Close"><svg width="12" height="12" viewBox="0 0 12 12"><path d="M.6 1h3L6 3.500 8.400 1h3L8 6l3.400 5h-3L6 8.500 3.600 11h-3L4 6Z" fill="#eee" stroke="#55606c" /></svg></button>
      </div>
    </header>

    <nav class="tabs">
      <button class="file">File</button>
      <button class="tab on">Home</button>
      <button class="tab t2">Automation</button>
      <button class="tab t2">Platforms</button>
      <button class="tab">View</button>
      <div class="mdi">
        <button class="bare" aria-label="Collapse ribbon"><svg width="10" height="8" viewBox="0 0 10 8"><path d="M1 7V5l4-4 4 4v2L5 4.500Z" fill="#fff" stroke="#444" /></svg></button>
        <button class="bare" aria-label="Help"><svg class="i16" viewBox="0 0 16 16"><circle cx="8" cy="8" r="7.500" fill="url(#gHelp)" /><path d="M5.500 6q0-2.500 2.500-2.500T10.500 6Q10.500 7 8 8.500v1.300M8 11v1.600" fill="none" stroke="#fff" stroke-width="1.500" /></svg></button>
        <button class="bare" aria-label="Minimize window"><svg width="8" height="10" viewBox="0 0 8 10"><path d="M1 8.500h6" stroke="#1e395b" stroke-width="2" /></svg></button>
        <button class="bare" aria-label="Restore window"><svg width="9" height="10" viewBox="0 0 9 10"><path d="M3 3V1h5.500v5H6M.5 4h5.500v5H.5ZM3 1.500h5.500M.5 4.500H6" fill="none" stroke="#1e395b" stroke-width="1.200" /></svg></button>
        <button class="bare navy" aria-label="Close window"><svg width="10" height="10"><use href="#i-x" /></svg></button>
      </div>
    </nav>

    <section class="ribbon" aria-label="Home ribbon">
      <div v-for="g in ribbon" :key="g.id" class="group" :class="'g-' + g.id">
        <div class="group-main">
          <div class="group-body">
            <template v-for="(p, i) in g.parts" :key="i">
              <button v-if="p.kind === 'big'" class="big" :class="[p.w, { off: p.off }]">
                <svg class="i32"><use :href="'#i-' + p.icon" /></svg>
                <span class="cap">{{ p.text }}</span>
                <svg v-if="p.menu" class="arrow"><use href="#i-down" /></svg>
              </button>
              <div v-else class="list" :class="p.w">
                <template v-for="r in p.rows" :key="r.text">
                  <label v-if="r.check" class="small off"><input type="checkbox" disabled /><span>{{ r.text }}</span></label>
                  <button v-else class="small" :class="{ off: r.off }">
                    <svg class="i16"><use :href="'#i-' + (r.icon === 'export' ? 'import' : r.icon)" /></svg>
                    <span>{{ r.text }}</span>
                    <svg v-if="r.menu" class="arrow"><use href="#i-down" /></svg>
                  </button>
                </template>
              </div>
            </template>
          </div>
          <div class="group-label">
            <span>{{ g.label }}</span>
            <svg v-if="g.launcher" class="launcher" width="8" height="8" viewBox="0 0 8 8"><path d="M.5 6V.5H6M3 3l3 3" fill="none" stroke="#66758f" /><path d="M7.500 3v4.500H3Z" fill="#66758f" /></svg>
          </div>
        </div>
        <i class="sep"></i>
      </div>
    </section>

    <main class="dock">
      <section class="col left">
        <div class="phead">
          <h2>Buses</h2>
          <button class="bare" aria-label="Menu"><svg class="arrow"><use href="#i-down" /></svg></button>
          <button class="bare" aria-label="Pin"><svg width="8" height="10"><use href="#i-pin" /></svg></button>
          <button class="bare" aria-label="Close"><svg width="9" height="9"><use href="#i-x" /></svg></button>
        </div>
        <div class="bus-tools">
          <div class="combo">
            <select aria-label="View set"><option>Communication Matrices by Cl</option></select>
            <svg width="9" height="6" viewBox="0 0 9 6"><path d="M.5.8l4 4 4-4" fill="none" stroke="#555" /></svg>
          </div>
        </div>
        <div class="grid-frame">
          <table class="grid">
            <colgroup><col class="c16" /><col class="c251" /><col class="c60" /><col class="c189" /><col /></colgroup>
            <thead><tr>
              <th></th><th><div>Name<i></i></div></th><th><div>Direction<i></i></div></th><th><div>Element Type<i></i></div></th><th></th>
            </tr></thead>
          </table>
          <p class="empty">No communication matrix is available.<br />Right-click and select Add Communication Matrix to add a communication matrix.</p>
        </div>
        <div class="btabs">
          <button class="btab"><svg class="i14"><use href="#i-hwres" /></svg>Hardware Resources</button>
          <i class="bsep"></i>
          <button class="btab"><svg class="i14"><use href="#i-m" /></svg>Models</button>
          <button class="btab on"><svg class="i14"><use href="#i-buses" /></svg>Buses</button>
        </div>
      </section>

      <section class="col center">
        <div class="doc">
          <div class="doctabs">
            <button v-for="t in docTabs" :key="t.text" class="dtab" :class="{ on: t.active }">
              <svg class="i16"><use :href="'#i-' + t.icon" /></svg><span>{{ t.text }}</span>
              <svg v-if="t.active" width="11" height="11" class="x"><use href="#i-x" /></svg>
            </button>
            <span class="fill"></span>
            <button class="bare navy" aria-label="Documents"><svg class="arrow"><use href="#i-down" /></svg></button>
            <button class="bare navy" aria-label="Close document"><svg width="12" height="12"><use href="#i-x" /></svg></button>
          </div>
          <div class="doc-frame">
            <table class="grid conf">
              <colgroup><col class="c16" /><col class="c251" /><col class="c60" /><col class="c267" /><col class="c200" /><col /></colgroup>
              <thead><tr>
                <th></th><th><div>Name<i></i></div></th><th><div>Direction<i></i></div></th><th><div>Element Type<i></i></div></th><th><div>Connected Model Ports<i></i></div></th><th><div>Frame Iden</div></th>
              </tr></thead>
              <tbody>
                <tr v-for="r in configRows" :key="r.name">
                  <td class="gut"></td>
                  <td class="namecell">
                    <div>
                      <span class="lead" :class="{ root: r.root }">
                        <svg v-if="r.root" width="6" height="6" viewBox="0 0 6 6"><path d="M6 0v6H0Z" fill="#444" /></svg>
                        <svg class="i16"><use :href="'#i-' + r.icon" /></svg>
                      </span>
                      <span class="nm">{{ r.name }}</span>
                    </div>
                  </td>
                  <td class="dis"></td>
                  <td class="type">{{ r.type }}</td>
                  <td class="dis"></td>
                  <td class="dis"></td>
                </tr>
              </tbody>
            </table>
            <div class="hscroll">
              <svg width="5" height="8" viewBox="0 0 5 8"><path d="M4.500 0v8L0 4Z" fill="#8a8f9c" /></svg>
              <div class="thumb"><i></i><i></i><i></i></div>
              <svg width="5" height="8" viewBox="0 0 5 8"><path d="M.5 0v8L5 4Z" fill="#8a8f9c" /></svg>
            </div>
          </div>
        </div>

        <div class="msgs">
          <div class="phead">
            <h2>Messages</h2>
            <button class="bare" aria-label="Menu"><svg class="arrow"><use href="#i-down" /></svg></button>
            <button class="bare" aria-label="Pin"><svg width="8" height="10"><use href="#i-pin" /></svg></button>
            <button class="bare" aria-label="Close"><svg width="9" height="9"><use href="#i-x" /></svg></button>
          </div>
          <div class="msg-tools">
            <button v-for="c in counters" :key="c.text" class="count"><svg class="i16"><use :href="'#i-' + c.icon" /></svg>{{ c.text }}</button>
            <span class="fill"></span>
            <div class="search">
              <input v-model="searchText" type="text" placeholder="Search" aria-label="Search messages" />
              <button class="bare" aria-label="Find"><svg class="i16"><use href="#i-lookup" /></svg></button>
              <button class="bare drop" aria-label="Search options"><svg class="arrow"><use href="#i-down" /></svg></button>
            </div>
            <button class="bare" aria-label="Next"><svg width="12" height="15" viewBox="0 0 12 15"><path d="M3 0h6v8h3l-6 7-6-7h3Z" fill="#9a9a9e" /></svg></button>
            <button class="bare" aria-label="Previous"><svg width="12" height="15" viewBox="0 0 12 15"><path d="M3 15h6V7h3L6 0 0 7h3Z" fill="#9a9a9e" /></svg></button>
          </div>
          <div class="msg-frame">
            <table class="mtable">
              <colgroup><col class="c93" /><col class="c80" /><col class="c80" /><col class="cmsg" /><col /></colgroup>
              <thead><tr><th>Severity</th><th>Module</th><th>Time</th><th>Message</th><th></th></tr></thead>
              <tbody>
                <tr v-for="(m, i) in messages" :key="i" :class="{ sel: m.selected }">
                  <td><span class="sev" :class="{ deep: m.deep }"><svg class="i16"><use href="#i-info" /></svg>Info</span></td>
                  <td>{{ m.module }}<span class="dots">⋯</span></td>
                  <td>{{ m.time }}<span class="dots">⋯</span></td>
                  <td>{{ m.text }}</td>
                  <td></td>
                </tr>
              </tbody>
            </table>
            <div class="vscroll">
              <svg width="8" height="5" viewBox="0 0 8 5"><path d="M.5 4.500 4 1l3.500 3.500" fill="none" stroke="#8a8a8a" stroke-width="1.300" /></svg>
              <span class="fill"></span>
              <i></i>
              <svg width="8" height="5" viewBox="0 0 8 5"><path d="M.5.5 4 4 7.500.5" fill="none" stroke="#8a8a8a" stroke-width="1.300" /></svg>
            </div>
          </div>
          <div class="btabs">
            <button class="btab"><svg class="i14"><use href="#i-conflict" /></svg>Conflicts</button>
            <button class="btab on"><svg class="i14"><use href="#i-messages" /></svg>Messages</button>
          </div>
        </div>
      </section>

      <section class="col right">
        <div class="phead">
          <h2>Properties</h2>
          <button class="bare" aria-label="Menu"><svg class="arrow"><use href="#i-down" /></svg></button>
          <button class="bare" aria-label="Pin"><svg width="8" height="10"><use href="#i-pin" /></svg></button>
          <button class="bare" aria-label="Close"><svg width="9" height="9"><use href="#i-x" /></svg></button>
        </div>
        <div class="prop-tools">
          <button class="tool on" aria-label="Categories"><svg class="i16"><use href="#i-list1" /></svg></button>
          <button class="tool" aria-label="Groups"><svg class="i16"><use href="#i-list2" /></svg></button>
          <button class="tool" aria-label="Flat list"><svg class="i16"><use href="#i-list3" /></svg></button>
          <i class="tsep"></i>
          <button class="tool on" aria-label="Intersection"><svg class="i16"><use href="#i-venn1" /></svg></button>
          <button class="tool" aria-label="Union"><svg class="i16"><use href="#i-venn2" /></svg></button>
          <button class="tool" aria-label="Compare"><svg class="i16"><use href="#i-venn3" /></svg></button>
          <span class="fill"></span>
          <i class="tsep"></i>
          <input v-model="filterText" type="text" placeholder="Filter by name" aria-label="Filter by name" />
          <i class="tsep"></i>
          <button class="tool lock" aria-label="Lock filter"><svg class="i16"><use href="#i-lockfilter" /></svg></button>
        </div>
        <div class="ptabs"><button class="ptab"><svg class="i16"><use href="#i-general" /></svg>General</button></div>
        <div class="grid-frame props">
          <table class="grid">
            <colgroup><col class="c16" /><col class="c211" /><col /></colgroup>
            <thead><tr><th></th><th><div>Name<i></i></div></th><th><div>Value<i></i></div></th></tr></thead>
          </table>
          <p class="empty">No element selected.</p>
        </div>
        <div class="strip"></div>
        <div class="descr">
          <div class="dscroll">
            <svg width="8" height="4" viewBox="0 0 8 4"><path d="M0 4h8L4 0Z" fill="#c6c8cc" /></svg>
            <svg width="8" height="4" viewBox="0 0 8 4"><path d="M0 0h8L4 4Z" fill="#c6c8cc" /></svg>
          </div>
        </div>
      </section>
    </main>

    <footer class="spaces">
      <a v-for="w in workspaces" :key="w" href="#" :class="{ on: w === 'Buses' }">{{ w }}</a>
      <span class="fill"></span>
      <span class="mark">CSDN @winnizap</span>
    </footer>

    <svg class="notes" aria-hidden="true">
      <g fill="none" stroke="#ff2212" stroke-width="3" stroke-linejoin="round">
        <rect x="951" y="48" width="59" height="79" rx="1" />
        <rect x="613" y="175" width="861" height="122" rx="1" />
        <rect x="432" y="966" width="109" height="42" rx="1" />
      </g>
      <path d="M484 946 483 945 925 74 931 77Z" fill="url(#gArrow)" />
      <path d="M934 63 920 73 928 75 935 77Z" fill="#ff2212" />
      <path d="M1029 92 1070 158 1064 162Z" fill="url(#gArrow2)" />
      <path d="M1073 169 1059 162 1066 160 1073 156Z" fill="#ff2212" />
      <text x="1076" y="154" fill="#ff2212">生成</text>
    </svg>
  </div>
</template>

<style>
body { margin: 0; }
</style>

<style scoped>
* { box-sizing: border-box; }
.desk {
  position: relative;
  display: flex;
  flex-direction: column;
  height: 100vh;
  overflow: hidden;
  background: #f0f0f0;
  border-bottom: 1px solid #7a9cc6;
  font: 12px/16px "Noto Sans", "Open Sans", sans-serif;
  color: #000;
}
button, input, select { font: inherit; color: inherit; margin: 0; padding: 0; border: 0; background: none; border-radius: 0; }
h1, h2, p { margin: 0; font-weight: 400; }
svg { display: block; flex: none; }
.sprites { position: absolute; }
.bare { display: flex; align-items: center; justify-content: center; }
.navy { color: #1e395b; }
.fill { flex: 1; }
.i14 { width: 14px; height: 14px; }
.i16 { width: 16px; height: 16px; }
.i32 { width: 32px; height: 32px; }
.arrow { width: 6px; height: 3px; }

.titlebar { display: flex; align-items: center; flex: none; height: 25px; background: linear-gradient(#bdccda, #d3deea); }
.quick { display: flex; align-items: center; gap: 7px; width: 160px; padding-left: 5px; }
.quick-sep { width: 1px; height: 14px; margin-right: -4px; background: #6f7b88; }
.titlebar h1 { flex: 1; font-size: 11px; text-align: center; color: #3b4754; white-space: nowrap; padding-top: 2px; padding-left: 9px; }
.winctl { display: flex; gap: 10px; width: 160px; justify-content: flex-end; padding: 0 5px 4px 0; }

.tabs { display: flex; align-items: flex-end; flex: none; height: 24px; background: #dfe9f5; font-size: 11px; color: #1e395b; border-bottom: 1px solid #b7c9df; }
.file { width: 56px; height: 22px; color: #fff; border: 1px solid #1f4c94; border-radius: 2px 2px 0 0; background: linear-gradient(#5580b8, #2c5ea6 45%, #164290 50%, #3f86cd); }
.tab { height: 22px; }
.tab.on { width: 54px; height: 24px; margin: 0 17px -1px 6px; background: #fbfdff; border: 1px solid #b7c9df; border-bottom: 0; border-radius: 3px 3px 0 0; }
.t2 { margin-right: 28px; }
.mdi { display: flex; align-items: center; gap: 7px; height: 24px; margin-left: auto; padding-right: 3px; }

.ribbon { display: flex; flex: none; height: 87px; background: linear-gradient(#f8fcff, #e4eefa 35%, #d9e4f4 60%, #dde8f7); border-bottom: 1px solid #c3cfdf; font-size: 11px; color: #1e395b; }
.group { display: flex; flex: none; }
.group-main { display: flex; flex-direction: column; flex: 1; min-width: 0; }
.group-body { display: flex; flex: 1; }
.group-label { position: relative; height: 19px; line-height: 16px; text-align: center; color: #71809a; white-space: nowrap; }
.launcher { position: absolute; right: 5px; top: 4px; }
.sep { width: 2px; height: 73px; margin-top: 5px; background: #a8b7cd; border-right: 1px solid #f4f8fd; }
.g-clipboard { width: 109px; }
.g-clipboard .group-body { padding-left: 3px; }
.g-delete { width: 53px; }
.g-delete .group-body, .g-build .group-body, .g-bsc .group-body { justify-content: center; }
.g-navigation { width: 162px; }
.g-navigation .group-body, .g-filters .group-body, .g-hardware .group-body { padding-left: 7px; }
.g-build { width: 53px; }
.g-bsc { width: 63px; }
.g-models { width: 155px; }
.g-models .group-body { padding-left: 2px; }
.g-hardware { width: 175px; }
.g-matrix { width: 172px; }
.g-matrix .group-body { padding-left: 3px; }
.g-busconf { width: 102px; }
.g-busconf .group-body { padding-left: 3px; }
.g-busaccess { width: 127px; }
.g-busaccess .group-body { padding-left: 4px; }
.g-filters { width: 311px; }
.w44 { width: 44px; }
.w46 { width: 46px; }
.w50 { width: 50px; }
.w56 { width: 56px; }
.w74 { width: 74px; }
.w85 { width: 85px; }
.w118 { width: 118px; }
.w133 { width: 133px; }
.big { display: flex; flex-direction: column; align-items: center; flex: none; padding-top: 6px; line-height: 11px; }
.big .cap { margin-top: 5px; }
.big .arrow { margin-top: 7px; opacity: .7; }
.list { flex: none; padding-top: 4px; }
.small { display: flex; align-items: center; gap: 3px; height: 19px; white-space: nowrap; }
.small .arrow { margin-bottom: 3px; }
.small input { width: 13px; height: 13px; margin-right: 3px; appearance: none; background: #f6f8fa; border: 1px solid #c4ccd4; }
.off { color: #8c929b; }

.dock { display: grid; grid-template-columns: minmax(0, 589fr) minmax(0, 877fr) minmax(0, 440fr); flex: 1; min-height: 0; column-gap: 7px; }
.col { display: flex; flex-direction: column; min-width: 0; min-height: 0; }
.center { padding-left: 2px; margin-right: -2px; }
.phead { display: flex; align-items: center; gap: 8px; flex: none; height: 22px; padding: 0 4px 0 3px; background: #bfccda; border: 1px solid #9a9fa6; border-width: 1px 1px 0 1px; }
.phead h2 { flex: 1; font-size: 12px; }
.left .phead, .left .btabs { margin-right: -5px; }

.bus-tools { flex: none; height: 25px; padding: 2px; }
.combo { position: relative; width: 209px; }
.combo select { width: 100%; height: 20px; padding-left: 20px; appearance: none; background: #fff; border: 1px solid #c9c9c9; border-radius: 2px; font: 10px/18px "DejaVu Sans Mono", "Liberation Mono", monospace; }
.combo svg { position: absolute; right: 4px; top: 8px; }
.grid-frame { flex: 1; min-height: 0; background: #fff; border: 1px solid #8494a9; }
.left .grid-frame { margin-bottom: 2px; }
.grid { width: 100%; border-collapse: separate; border-spacing: 0; table-layout: fixed; font: 12px/16px "DejaVu Sans Condensed", "Noto Sans", sans-serif; color: #4d5a73; }
.grid th { height: 21px; padding: 0; font-weight: 400; text-align: left; background: linear-gradient(#eceff2, #dbe0ea 50%, #d7dce6); border-right: 1px solid #bcc2d3; border-bottom: 1px solid #b4bccd; white-space: nowrap; overflow: hidden; }
.grid th:last-child { border-right: 0; }
.grid th div { display: flex; justify-content: space-between; align-items: center; height: 20px; padding-left: 4px; }
.grid th i { width: 6px; height: 6px; margin: 2px 1px 0 -6px; align-self: flex-start; background: #a0a0a0; }
.c16 { width: 16px; }
.c60 { width: 60px; }
.c80 { width: 80px; }
.c93 { width: 93px; }
.c189 { width: 189px; }
.c200 { width: 200px; }
.c211 { width: 211px; }
.c251 { width: 251px; }
.c267 { width: 267px; }
.cmsg { width: 499px; }
.empty { padding: 21px 24px; font: 10px/14px "DejaVu Sans Mono", "Liberation Mono", monospace; color: #333; white-space: nowrap; }

.btabs { display: flex; flex: none; height: 22px; padding-left: 4px; border-top: 1px solid #a0a0a0; color: #6d6d6d; background: #f1f1f1; }
.btab { display: flex; align-items: center; gap: 4px; height: 20px; padding: 0 4px; }
.btab.on { height: 21px; margin-top: -1px; padding: 0 5px; color: #000; background: #fff; border: 1px solid #a0a0a0; border-top-color: #fff; border-radius: 0 0 3px 3px; }
.bsep { width: 1px; height: 14px; margin: 3px 1px; background: #a0a0a0; }

.doc { display: flex; flex-direction: column; flex: 1; min-height: 0; background: #dce8f6; border-bottom: 1px solid #bccfe4; }
.doctabs { display: flex; align-items: flex-end; flex: none; height: 26px; padding-left: 6px; border-bottom: 1px solid #b7c9df; color: #1e395b; }
.dtab { display: flex; align-items: center; gap: 4px; height: 25px; padding: 0 5px 0 8px; white-space: nowrap; }
.dtab.on { padding: 0 3px 0 4px; height: 24px; margin-bottom: -1px; background: #fafcff; border: 1px solid #b7c9df; border-bottom: 0; border-radius: 3px 3px 0 0; }
.dtab .x { margin-left: 3px; }
.doctabs .bare { height: 24px; width: 16px; }
.doc-frame { display: flex; flex-direction: column; flex: 1; min-height: 0; margin: 3px 6px 7px 6px; background: #fff; border: 2px solid #6c7681; border-right: 1px solid #8494a9; border-bottom: 1px solid #8494a9; }
.conf { margin-bottom: auto; }
.conf td { height: 19px; padding: 0; border-right: 1px solid #c8cddd; border-bottom: 1px solid #d8dbe8; white-space: nowrap; }
.conf td:last-child { border-right: 0; }
.conf .gut { background: #dfe3ec; border-color: #c0c6d8; }
.conf .dis { background: #d2d2d2; }
.conf .type { padding-left: 4px; color: #858585; }
.conf .namecell { border-bottom: 0; border-right: 2px solid #bcc2d3; }
.namecell div { display: flex; height: 19px; }
.lead { display: flex; align-items: center; width: 72px; padding-left: 37px; }
.lead.root { width: 54px; padding-left: 6px; gap: 7px; }
.nm { flex: 1; padding: 1px 0 0 4px; border-left: 1px solid #d8dbe8; border-bottom: 1px solid #d8dbe8; color: #1b2538; }
.hscroll { display: flex; align-items: center; gap: 6px; flex: none; height: 17px; padding: 0 6px; background: #e6e7ea; }
.hscroll .thumb { display: flex; align-items: center; justify-content: center; gap: 2px; flex: 1; height: 14px; margin-right: 32px; border: 1px solid #a3a8b3; border-radius: 2px; background: linear-gradient(#eceff3, #dde1e8 48%, #ccd2dd 52%, #d6dbe5); }
.thumb i { width: 1px; height: 7px; background: #5a6270; }

.msgs { display: flex; flex-direction: column; flex: none; padding-top: 4px; }
.msg-tools { display: flex; align-items: center; gap: 6px; flex: none; height: 30px; padding: 0 4px 0 2px; background: linear-gradient(#fff, #f4f4f6); font: 10px/16px "DejaVu Sans Mono", "Liberation Mono", monospace; }
.count { display: flex; align-items: center; gap: 3px; height: 22px; padding: 0 6px 0 3px; background: #c2dcfd; border: 1px solid #e3ecf7; }
.search { display: flex; align-items: center; width: 180px; height: 24px; padding-left: 4px; background: #fff; border: 1px solid #dcdcdc; }
.search input { flex: 1; min-width: 0; font-style: italic; }
.search .drop { width: 13px; height: 22px; border-left: 1px solid #dcdcdc; }
.msg-tools > .bare { width: 16px; }
.search input::placeholder { color: #969696; opacity: 1; }
.msg-frame { display: flex; height: 124px; margin-bottom: 2px; padding: 1px; background: #fff; border: 1px solid #868a96; }
.mtable { flex: 1; align-self: flex-start; table-layout: fixed; border-collapse: separate; border-spacing: 0; font: 10px/16px "DejaVu Sans Mono", "Liberation Mono", monospace; }
.mtable th { height: 20px; padding: 0; font-weight: 400; border-right: 1px solid #dedfe2; border-bottom: 1px solid #cfd1d5; background: linear-gradient(#fff, #fafafc); }
.mtable th:last-child { border-right: 0; }
.mtable td { height: 21px; padding: 0 0 0 6px; white-space: nowrap; }
.mtable td:first-child { padding-left: 27px; }
.sel td { background: linear-gradient(#f3f3f3, #dcdcdc); border-top: 1px solid #d0d0d0; border-bottom: 1px solid #c8c8c8; }
.sev { display: flex; align-items: center; gap: 3px; }
.sev.deep { padding-left: 16px; }
.dots { font: 12px/12px "Noto Sans CJK SC", sans-serif; }
.vscroll { display: flex; flex-direction: column; align-items: center; width: 17px; padding: 6px 0; background: #f0f0f0; }
.vscroll i { width: 17px; height: 8px; margin-bottom: 6px; background: #cdcdcd; }

.prop-tools { display: flex; align-items: center; flex: none; height: 26px; padding: 0 1px 2px 0; background: linear-gradient(#fafafa, #f0f0f0); }
.tool { display: flex; align-items: center; justify-content: center; width: 23px; height: 22px; }
.tool.on { border: 1px solid #2a7ad5; background: #f3f8fe; }
.tool.lock { background: #e8e8e8; }
.tsep { width: 1px; height: 15px; margin: 0 5px; background: #c4c4c4; }
.prop-tools input { width: 176px; height: 24px; padding-left: 3px; background: #fff; }
.prop-tools input::placeholder { color: #767676; opacity: 1; }
.ptabs { display: flex; align-items: flex-end; flex: none; height: 24px; padding-left: 4px; margin-bottom: 1px; border-bottom: 1px solid #a0a0a0; }
.ptab { display: flex; align-items: center; gap: 3px; height: 20px; padding: 0 6px 0 3px; background: #fff; border: 1px solid #a0a0a0; border-bottom: 0; border-radius: 3px 3px 0 0; }
.props { margin: 0 0 2px; }
.strip { flex: none; height: 19px; margin-bottom: 5px; border: 1px solid #fff; border-bottom: 1px solid #808080; }
.descr { display: flex; justify-content: flex-end; flex: none; height: 197px; background: #e2e2e2; border: 1px solid #8f9fb8; }
.dscroll { display: flex; flex-direction: column; justify-content: space-between; align-items: center; width: 16px; padding: 6px 0; background: #e7e8ea; border-left: 1px solid #fff; }

.spaces { display: flex; align-items: center; gap: 34px; flex: none; height: 37px; padding: 1px 16px 0 18px; background: #f1f1f1; font-size: 20px; line-height: 28px; }
.spaces a { color: #000; text-decoration: none; white-space: nowrap; }
.spaces a.on { color: #0f6fc6; }
.mark { font: 13px/16px "Liberation Sans", sans-serif; color: #8e8e8e; }

.notes { position: absolute; left: 0; top: 0; width: 100%; height: 100%; pointer-events: none; }
.notes text { font: 21px "Noto Sans CJK SC", sans-serif; }
</style>
